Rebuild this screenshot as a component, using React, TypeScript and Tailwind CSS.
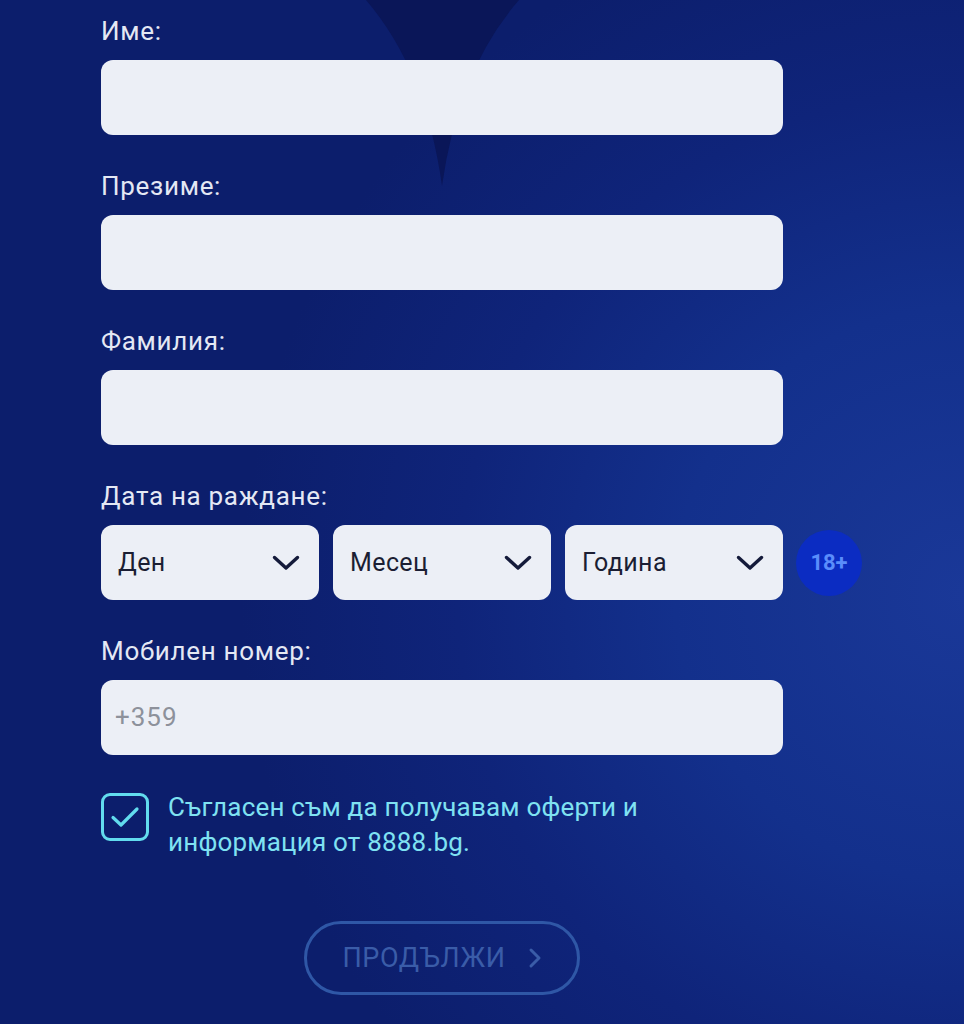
import React, { useState } from 'react';

const font = { fontFamily: 'Roboto, "Noto Sans", sans-serif' };

function Field({ label, placeholder }: { label: string; placeholder?: string }) {
  return (
    <div className="flex flex-col">
      <label className="text-[26px] leading-[32px] tracking-[0.7px] text-[#e4e8f4] mb-[13px]">{label}</label>
      <div className="w-[682px] h-[75px] rounded-[12px] bg-[#eceff6] flex items-center px-[14px]">
        {placeholder && <span className="text-[26px] tracking-[1px] text-[#8d919b]">{placeholder}</span>}
      </div>
    </div>
  );
}

function Select({ label }: { label: string }) {
  return (
    <div className="h-[75px] rounded-[12px] bg-[#eceff6] flex items-center justify-between pl-[17px] pr-[19px]">
      <span className="text-[25px] tracking-[0.4px] text-[#1b1e33]">{label}</span>
      <svg width="28" height="16" viewBox="0 0 28 16" fill="none">
        <path d="M2.5 2.5 L14 13 L25.5 2.5" stroke="#141a3a" strokeWidth="3.4" strokeLinecap="round" strokeLinejoin="round" />
      </svg>
    </div>
  );
}

export default function App() {
  const [agree, setAgree] = useState(true);

  return (
    <div
      className="relative w-[964px] h-[1024px] overflow-hidden bg-[radial-gradient(ellipse_75%_70%_at_100%_58%,#1a3898_0%,#13308c_40%,#0f247a_70%,#0c1e6c_100%)]"
      style={font}
    >
      {/* decorative dark wedge at the top */}
      <svg className="absolute left-0 top-0" width="964" height="200" viewBox="0 0 964 200">
        <path d="M366 0 L519 0 Q458 70 442 186 Q426 70 366 0 Z" fill="#0a1658" />
      </svg>

      <div className="relative flex flex-col pl-[101px] pt-[15px] gap-[35px]">
        <Field label="Име:" />
        <Field label="Презиме:" />
        <Field label="Фамилия:" />

        <div className="flex flex-col">
          <label className="text-[26px] leading-[32px] tracking-[0.7px] text-[#e4e8f4] mb-[13px]">Дата на раждане:</label>
          <div className="flex items-center">
            <div className="grid grid-cols-3 gap-[14px] w-[682px]">
              <Select label="Ден" />
              <Select label="Месец" />
              <Select label="Година" />
            </div>
            <div className="ml-[13px] w-[66px] h-[66px] rounded-full bg-[#0b2cc2] flex items-center justify-center text-[22px] font-bold text-[#5a8dfb]">
              18+
            </div>
          </div>
        </div>

        <Field label="Мобилен номер:" placeholder="+359" />

        <div className="flex items-start mt-[3px]">
          <button
            type="button"
            onClick={() => setAgree(!agree)}
            className="w-[48px] h-[48px] shrink-0 rounded-[9px] border-[3px] border-[#62dcee] flex items-center justify-center"
          >
            {agree && (
              <svg width="30" height="24" viewBox="0 0 30 24" fill="none">
                <path d="M3 12.5 L11 20 L27 4" stroke="#62dcee" strokeWidth="3.2" strokeLinecap="round" strokeLinejoin="round" />
              </svg>
            )}
          </button>
          <p className="ml-[19px] text-[26px] leading-[35px] tracking-[0.2px] text-[#7fe2f2] mt-[-3px]">
            Съгласен съм да получавам оферти и
            <br />
            информация от 8888.bg.
          </p>
        </div>

        <div className="w-[682px] flex justify-center mt-[26px]">
          <button
            type="button"
            className="w-[276px] h-[74px] rounded-full border-[3px] border-[#2f57a6] flex items-center justify-center gap-[22px] text-[27px] text-[#3a5ca8] tracking-[0.6px]"
          >
            <span>ПРОДЪЛЖИ</span>
            <svg width="14" height="22" viewBox="0 0 14 22" fill="none">
              <path d="M3 3 L11 11 L3 19" stroke="#3a5ca8" strokeWidth="3" strokeLinecap="round" strokeLinejoin="round" />
            </svg>
          </button>
        </div>
      </div>
    </div>
  );
}
